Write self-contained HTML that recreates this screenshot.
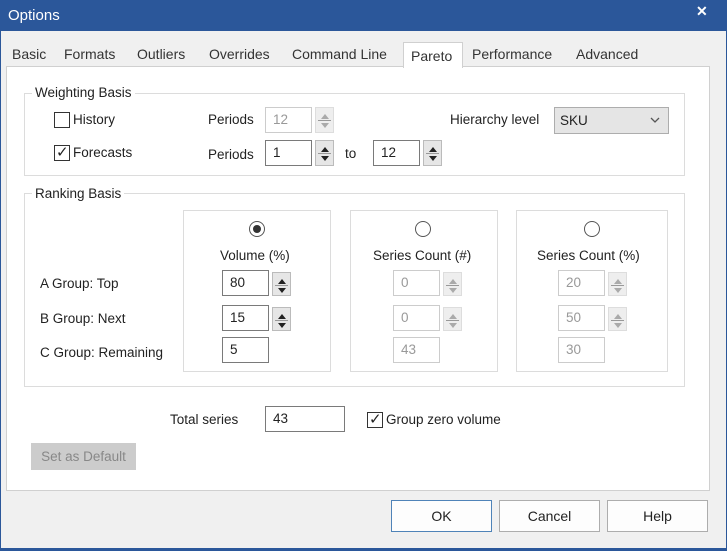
<!DOCTYPE html>
<html><head><style>
*{margin:0;padding:0;box-sizing:border-box}
body{width:727px;height:551px;background:#f0f0f0;font-family:"Liberation Sans",sans-serif;font-size:13.5px;color:#222;position:relative;overflow:hidden}
.a{position:absolute}
.title{left:0;top:0;width:727px;height:31px;background:#2b579a;color:#fff;font-size:15px}
.tab{top:46px;color:#333;font-size:14px}
.grp{border:1px solid #dcdcdc}
.lbl{background:#fff;padding:0 3px}
.box{background:#fff;border:1px solid #7a7a7a;height:26px;padding:4px 7px}
.dis{border-color:#ccc;color:#999}
.spin{width:19px;height:26px;border:1px solid #bbb;background:#e6e6e6}
.spin:before{content:"";position:absolute;left:5px;top:6px;border:4px solid transparent;border-bottom:5px solid #222;border-top:0}
.spin:after{content:"";position:absolute;left:5px;top:15px;border:4px solid transparent;border-top:5px solid #222;border-bottom:0}
.spin i{position:absolute;left:2px;right:2px;top:12px;height:1px;background:#999}
.spin.d:before{border-bottom-color:#aaa}.spin.d:after{border-top-color:#aaa}.spin.d{border-color:#ddd;background:#eee}
.cb{width:16px;height:16px;border:1px solid #333;background:#fff}
.rad{width:16px;height:16px;border:1px solid #555;border-radius:50%;background:#fff}
.btn{height:32px;width:101px;border:1px solid #adadad;background:#fdfdfd;text-align:center;line-height:30px;font-size:14px}
</style></head><body>
<div class="a title"><span class="a" style="left:8px;top:7px">Options</span><span class="a" style="left:696px;top:3px;font-size:14px;font-weight:bold">✕</span></div>
<div class="a" style="left:0;top:31px;width:1px;height:520px;background:#2b579a"></div>
<div class="a" style="right:0;top:31px;width:1px;height:520px;background:#2b579a"></div>
<div class="a" style="left:0;top:548px;width:727px;height:3px;background:#2b579a"></div>
<div class="a" style="left:6px;top:66px;width:704px;height:425px;background:#fff;border:1px solid #d0d0d0"></div>
<div class="a" style="left:403px;top:42px;width:60px;height:26px;background:#fff;border:1px solid #d0d0d0;border-bottom:none"></div>
<span class="a tab" style="left:12px">Basic</span>
<span class="a tab" style="left:64px">Formats</span>
<span class="a tab" style="left:137px">Outliers</span>
<span class="a tab" style="left:209px">Overrides</span>
<span class="a tab" style="left:292px">Command Line</span>
<span class="a tab" style="left:411px;top:48px">Pareto</span>
<span class="a tab" style="left:472px">Performance</span>
<span class="a tab" style="left:576px">Advanced</span>

<div class="a grp" style="left:24px;top:93px;width:661px;height:83px"></div>
<span class="a lbl" style="left:32px;top:85px">Weighting Basis</span>
<div class="a cb" style="left:54px;top:112px"></div><span class="a" style="left:73px;top:112px">History</span>
<div class="a cb" style="left:54px;top:145px"><span class="a" style="left:1px;top:-3px;font-size:15px">✓</span></div><span class="a" style="left:73px;top:145px">Forecasts</span>
<span class="a" style="left:208px;top:112px">Periods</span>
<div class="a box dis" style="left:265px;top:107px;width:47px">12</div><div class="a spin d" style="left:315px;top:107px"><i></i></div>
<span class="a" style="left:208px;top:147px">Periods</span>
<div class="a box" style="left:265px;top:140px;width:47px">1</div><div class="a spin" style="left:315px;top:140px"><i></i></div>
<span class="a" style="left:345px;top:146px">to</span>
<div class="a box" style="left:373px;top:140px;width:47px">12</div><div class="a spin" style="left:423px;top:140px"><i></i></div>
<span class="a" style="left:450px;top:112px">Hierarchy level</span>
<div class="a" style="left:554px;top:107px;width:115px;height:27px;background:#e5e5e5;border:1px solid #adadad;padding:5px 5px">SKU<svg class="a" style="right:8px;top:9px" width="10" height="7"><path d="M1 1L5 5L9 1" fill="none" stroke="#555" stroke-width="1.3"/></svg></div>

<div class="a grp" style="left:24px;top:193px;width:661px;height:194px"></div>
<span class="a lbl" style="left:32px;top:186px">Ranking Basis</span>
<span class="a" style="left:40px;top:276px">A Group: Top</span>
<span class="a" style="left:40px;top:311px">B Group: Next</span>
<span class="a" style="left:40px;top:345px">C Group: Remaining</span>

<div class="a grp" style="left:183px;top:210px;width:148px;height:162px"></div>
<div class="a rad" style="left:249px;top:221px"><div class="a" style="left:3px;top:3px;width:8px;height:8px;border-radius:50%;background:#333"></div></div>
<span class="a" style="left:220px;top:248px">Volume (%)</span>
<div class="a box" style="left:222px;top:270px;width:47px">80</div><div class="a spin" style="left:272px;top:272px;height:24px"><i></i></div>
<div class="a box" style="left:222px;top:305px;width:47px">15</div><div class="a spin" style="left:272px;top:307px;height:24px"><i></i></div>
<div class="a box" style="left:222px;top:337px;width:47px">5</div>

<div class="a grp" style="left:350px;top:210px;width:148px;height:162px"></div>
<div class="a rad" style="left:415px;top:221px"></div>
<span class="a" style="left:373px;top:248px">Series Count (#)</span>
<div class="a box dis" style="left:393px;top:270px;width:47px">0</div><div class="a spin d" style="left:443px;top:272px;height:24px"><i></i></div>
<div class="a box dis" style="left:393px;top:305px;width:47px">0</div><div class="a spin d" style="left:443px;top:307px;height:24px"><i></i></div>
<div class="a box dis" style="left:393px;top:337px;width:47px">43</div>

<div class="a grp" style="left:516px;top:210px;width:152px;height:162px"></div>
<div class="a rad" style="left:584px;top:221px"></div>
<span class="a" style="left:537px;top:248px">Series Count (%)</span>
<div class="a box dis" style="left:558px;top:270px;width:47px">20</div><div class="a spin d" style="left:608px;top:272px;height:24px"><i></i></div>
<div class="a box dis" style="left:558px;top:305px;width:47px">50</div><div class="a spin d" style="left:608px;top:307px;height:24px"><i></i></div>
<div class="a box dis" style="left:558px;top:337px;width:47px">30</div>

<span class="a" style="left:170px;top:412px">Total series</span>
<div class="a box" style="left:265px;top:406px;width:80px">43</div>
<div class="a cb" style="left:367px;top:412px"><span class="a" style="left:1px;top:-3px;font-size:15px">✓</span></div><span class="a" style="left:386px;top:412px">Group zero volume</span>
<div class="a" style="left:31px;top:443px;width:105px;height:27px;background:#ccc;color:#888;text-align:center;line-height:27px">Set as Default</div>

<div class="a btn" style="left:391px;top:500px;border:1px solid #4f83b8">OK</div>
<div class="a btn" style="left:499px;top:500px">Cancel</div>
<div class="a btn" style="left:607px;top:500px">Help</div>
</body></html>
